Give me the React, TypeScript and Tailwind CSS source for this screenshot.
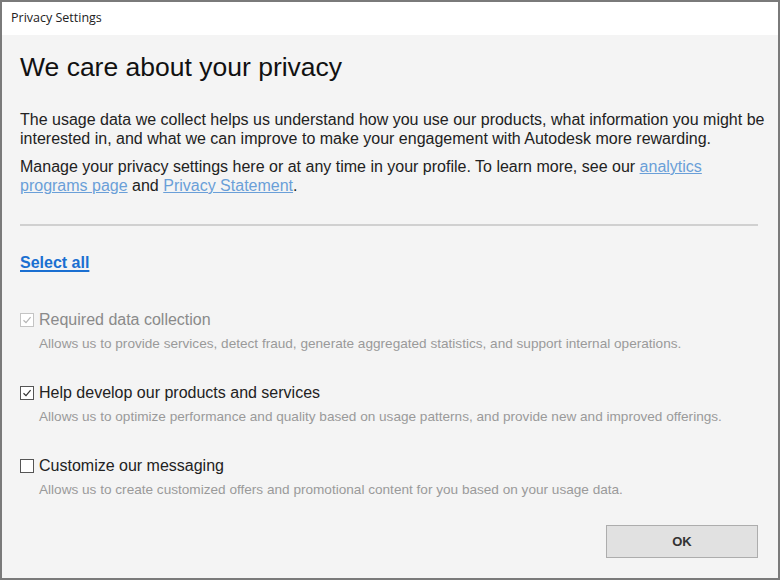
import React, { useState } from "react";

function Box({ checked, disabled, onClick }: { checked: boolean; disabled?: boolean; onClick?: () => void }) {
  return (
    <span
      onClick={onClick}
      className={`w-[14px] h-[14px] shrink-0 border flex items-center justify-center bg-white ${
        disabled ? "border-[#c4c4c4]" : "border-[#555]"
      }`}
    >
      {checked && (
        <svg width="10" height="10" viewBox="0 0 10 10">
          <path d="M1.5 5.2 L4 7.6 L8.6 2.2" fill="none" stroke={disabled ? "#b5b5b5" : "#333"} strokeWidth="1.2" />
        </svg>
      )}
    </span>
  );
}

export default function App() {
  const [help, setHelp] = useState(true);
  const [custom, setCustom] = useState(false);

  const options = [
    {
      label: "Required data collection",
      desc: "Allows us to provide services, detect fraud, generate aggregated statistics, and support internal operations.",
      checked: true,
      disabled: true,
      toggle: undefined,
    },
    {
      label: "Help develop our products and services",
      desc: "Allows us to optimize performance and quality based on usage patterns, and provide new and improved offerings.",
      checked: help,
      disabled: false,
      toggle: () => setHelp(!help),
    },
    {
      label: "Customize our messaging",
      desc: "Allows us to create customized offers and promotional content for you based on your usage data.",
      checked: custom,
      disabled: false,
      toggle: () => setCustom(!custom),
    },
  ];

  return (
    <div className="w-[780px] h-[580px] flex flex-col border-2 border-[#7a7a7a] bg-[#f4f4f4] font-['Liberation_Sans',Arial,sans-serif] text-[#222]">
      {/* title bar */}
      <div className="h-[33px] bg-white flex items-center pl-[9px] text-[12.5px] text-[#222] font-['Open_Sans','Noto_Sans',sans-serif]">
        Privacy Settings
      </div>

      <div className="flex-1 flex flex-col px-[18px]">
        <h1 className="mt-[17px] text-[26.5px] leading-[30px] text-[#111]">We care about your privacy</h1>

        <p className="mt-[28px] mr-[-14px] text-[16px] leading-[19px]">
          The usage data we collect helps us understand how you use our products, what information you might be
          interested in, and what we can improve to make your engagement with Autodesk more rewarding.
        </p>
        <p className="mt-[9px] text-[16px] leading-[19px]">
          Manage your privacy settings here or at any time in your profile. To learn more, see our{" "}
          <a className="text-[#6a9fd8] underline">analytics</a>{" "}
          <a className="text-[#6a9fd8] underline">programs page</a> and{" "}
          <a className="text-[#6a9fd8] underline">Privacy Statement</a>.
        </p>

        <div className="mt-[29px] mr-[2px] h-[2px] bg-[#d0d0d0]" />

        <a className="mt-[28px] self-start text-[16px] leading-[18px] font-bold text-[#1a6fd1] underline decoration-2 underline-offset-2">
          Select all
        </a>

        <div className="mt-[38px] flex flex-col gap-[31px]">
          {options.map((o) => (
            <div key={o.label} className="flex flex-col">
              <label className="flex items-center gap-[5px] cursor-pointer" onClick={o.toggle}>
                <Box checked={o.checked} disabled={o.disabled} />
                <span className={`text-[16px] leading-[19px] ${o.disabled ? "text-[#8a8a8a]" : "text-[#222]"}`}>{o.label}</span>
              </label>
              <div className="mt-[7px] ml-[19px] text-[13.6px] leading-[16px] text-[#9a9a9a]">{o.desc}</div>
            </div>
          ))}
        </div>

        <div className="mt-auto mb-[20px] flex justify-end">
          <button className="w-[152px] h-[33px] bg-[#e1e1e1] border border-[#adadad] text-[13px] font-semibold text-[#333] mr-[2px]">
            OK
          </button>
        </div>
      </div>
    </div>
  );
}
